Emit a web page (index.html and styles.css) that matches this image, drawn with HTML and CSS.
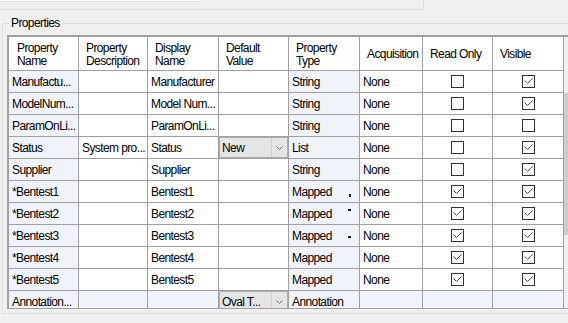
FILE: index.html
```html
<!DOCTYPE html>
<html lang="en">
<head>
  <meta charset="UTF-8">
  <title>Properties</title>
  <link rel="stylesheet" href="styles.css">
</head>
<body>

  <div class="toolbar">
    <div class="search"></div>
  </div>

  <fieldset class="group">
    <legend>Properties</legend>

    <div class="grid">
      <div class="table">
        <!-- header -->
        <div class="head first">Property<br>Name</div>
        <div class="head">Property<br>Description</div>
        <div class="head">Display<br>Name</div>
        <div class="head">Default<br>Value</div>
        <div class="head">Property<br>Type</div>
        <div class="head">Acquisition</div>
        <div class="head">Read Only</div>
        <div class="head">Visible</div>

        <div class="cell key">Manufactu...</div>
        <div class="cell"></div>
        <div class="cell">Manufacturer</div>
        <div class="cell"></div>
        <div class="cell type">String</div>
        <div class="cell">None</div>
        <div class="cell check"><span class="box"></span></div>
        <div class="cell check"><span class="box"><svg width="11" height="11" viewBox="0 0 11 11"><path d="M1.5 4.5 L4.5 7.5 L9.5 2.5"/></svg></span></div>

        <div class="cell key">ModelNum...</div>
        <div class="cell"></div>
        <div class="cell">Model Num...</div>
        <div class="cell"></div>
        <div class="cell type">String</div>
        <div class="cell">None</div>
        <div class="cell check"><span class="box"></span></div>
        <div class="cell check"><span class="box"><svg width="11" height="11" viewBox="0 0 11 11"><path d="M1.5 4.5 L4.5 7.5 L9.5 2.5"/></svg></span></div>

        <div class="cell key">ParamOnLi...</div>
        <div class="cell"></div>
        <div class="cell">ParamOnLi...</div>
        <div class="cell"></div>
        <div class="cell type">String</div>
        <div class="cell">None</div>
        <div class="cell check"><span class="box"></span></div>
        <div class="cell check"><span class="box"></span></div>

        <div class="cell key">Status</div>
        <div class="cell">System pro...</div>
        <div class="cell">Status</div>
        <div class="cell combo-cell">
          <div class="combo"><span class="combo-text">New</span><span class="arrow"><svg width="7" height="4" viewBox="0 0 7 4"><path d="M0.5 0.5 L3.5 3.5 L6.5 0.5"/></svg></span></div>
        </div>
        <div class="cell type">List</div>
        <div class="cell">None</div>
        <div class="cell check"><span class="box"></span></div>
        <div class="cell check"><span class="box"><svg width="11" height="11" viewBox="0 0 11 11"><path d="M1.5 4.5 L4.5 7.5 L9.5 2.5"/></svg></span></div>

        <div class="cell key">Supplier</div>
        <div class="cell"></div>
        <div class="cell">Supplier</div>
        <div class="cell"></div>
        <div class="cell type">String</div>
        <div class="cell">None</div>
        <div class="cell check"><span class="box"></span></div>
        <div class="cell check"><span class="box"><svg width="11" height="11" viewBox="0 0 11 11"><path d="M1.5 4.5 L4.5 7.5 L9.5 2.5"/></svg></span></div>

        <div class="cell key">*Bentest1</div>
        <div class="cell"></div>
        <div class="cell">Bentest1</div>
        <div class="cell"></div>
        <div class="cell type">Mapped<span class="mark mark-low"></span></div>
        <div class="cell">None</div>
        <div class="cell check"><span class="box"><svg width="11" height="11" viewBox="0 0 11 11"><path d="M1.5 4.5 L4.5 7.5 L9.5 2.5"/></svg></span></div>
        <div class="cell check"><span class="box"><svg width="11" height="11" viewBox="0 0 11 11"><path d="M1.5 4.5 L4.5 7.5 L9.5 2.5"/></svg></span></div>

        <div class="cell key">*Bentest2</div>
        <div class="cell"></div>
        <div class="cell">Bentest2</div>
        <div class="cell"></div>
        <div class="cell type">Mapped<span class="mark mark-top"></span></div>
        <div class="cell">None</div>
        <div class="cell check"><span class="box"><svg width="11" height="11" viewBox="0 0 11 11"><path d="M1.5 4.5 L4.5 7.5 L9.5 2.5"/></svg></span></div>
        <div class="cell check"><span class="box"><svg width="11" height="11" viewBox="0 0 11 11"><path d="M1.5 4.5 L4.5 7.5 L9.5 2.5"/></svg></span></div>

        <div class="cell key">*Bentest3</div>
        <div class="cell"></div>
        <div class="cell">Bentest3</div>
        <div class="cell"></div>
        <div class="cell type">Mapped<span class="mark mark-mid"></span></div>
        <div class="cell">None</div>
        <div class="cell check"><span class="box"><svg width="11" height="11" viewBox="0 0 11 11"><path d="M1.5 4.5 L4.5 7.5 L9.5 2.5"/></svg></span></div>
        <div class="cell check"><span class="box"><svg width="11" height="11" viewBox="0 0 11 11"><path d="M1.5 4.5 L4.5 7.5 L9.5 2.5"/></svg></span></div>

        <div class="cell key">*Bentest4</div>
        <div class="cell"></div>
        <div class="cell">Bentest4</div>
        <div class="cell"></div>
        <div class="cell type">Mapped</div>
        <div class="cell">None</div>
        <div class="cell check"><span class="box"><svg width="11" height="11" viewBox="0 0 11 11"><path d="M1.5 4.5 L4.5 7.5 L9.5 2.5"/></svg></span></div>
        <div class="cell check"><span class="box"><svg width="11" height="11" viewBox="0 0 11 11"><path d="M1.5 4.5 L4.5 7.5 L9.5 2.5"/></svg></span></div>

        <div class="cell key">*Bentest5</div>
        <div class="cell"></div>
        <div class="cell">Bentest5</div>
        <div class="cell"></div>
        <div class="cell type">Mapped</div>
        <div class="cell">None</div>
        <div class="cell check"><span class="box"><svg width="11" height="11" viewBox="0 0 11 11"><path d="M1.5 4.5 L4.5 7.5 L9.5 2.5"/></svg></span></div>
        <div class="cell check"><span class="box"><svg width="11" height="11" viewBox="0 0 11 11"><path d="M1.5 4.5 L4.5 7.5 L9.5 2.5"/></svg></span></div>

        <!-- read-only row -->
        <div class="cell key">Annotation...</div>
        <div class="cell ro"></div>
        <div class="cell ro"></div>
        <div class="cell combo-cell">
          <div class="combo"><span class="combo-text">Oval T...</span><span class="arrow"><svg width="7" height="4" viewBox="0 0 7 4"><path d="M0.5 0.5 L3.5 3.5 L6.5 0.5"/></svg></span></div>
        </div>
        <div class="cell type">Annotation</div>
        <div class="cell ro"></div>
        <div class="cell ro"></div>
        <div class="cell ro"></div>
      </div>

      <div class="scrollbar">
        <div class="thumb"></div>
      </div>
    </div>
  </fieldset>

</body>
</html>
```

FILE: styles.css
```css
/* Window */
body {
  margin: 0;
  background: #f0f0f0;
  font-family: "Liberation Sans", Arial, sans-serif;
  font-size: 12px;
  letter-spacing: -0.6px;
  color: #000;
  overflow: hidden;
}

/* Strip above the group box */
.toolbar {
  width: 423px;
  height: 9px;
  border-right: 1px solid #dcdcdc;
  border-bottom: 1px solid #dcdcdc;
}

.search {
  width: 202px;
  height: 1px;
  background: #fff;
  border-bottom: 1px solid #e3e3e3;
}

/* Group box (runs on past the right edge of the window) */
.group {
  box-sizing: border-box;
  margin: 6px 0 0 2px;
  padding: 5px 0 4px 4px;
  border: 1px solid #dcdcdc;
  border-right: none;
  width: 566px;
  min-width: 0;
  overflow: hidden;
}

.group legend {
  padding: 0 2px;
  margin-left: 2px;
  line-height: 14px;
}

/* Data grid */
.grid {
  display: flex;
  height: 271px;
  overflow: hidden;
  border-top: 2px solid #a0a0a0;
  border-left: 2px solid #a0a0a0;
  border-bottom: 1px solid #a0a0a0;
  background: #fff;
}

.table {
  display: grid;
  grid-template-columns: 70px 69px 71px 70px 71px 63px 70px 71px;
  grid-template-rows: 34px;
  grid-auto-rows: 22px;
  width: 555px;
  flex: none;
}

.head,
.cell {
  box-sizing: border-box;
  border-right: 1px solid #a0a0a0;
  border-bottom: 1px solid #a0a0a0;
  display: flex;
  align-items: center;
  white-space: nowrap;
  overflow: hidden;
}

.head {
  padding: 2px 4px 0 7px;
  line-height: 13px;
}

.head.first {
  padding-left: 8px;
}

.cell {
  padding: 0 3px;
}

.key,
.type,
.ro {
  background: #f0f4fa;
}

.type {
  justify-content: space-between;
  padding-right: 8px;
}

/* Small busy marks in mapped cells */
.mark {
  width: 3px;
  height: 2px;
  background: #1a1a1a;
  align-self: flex-start;
}

.mark-low {
  width: 2px;
  height: 3px;
  margin-top: 13px;
}

.mark-top {
  margin-top: 6px;
}

.mark-mid {
  margin-top: 11px;
}

/* Check boxes */
.check {
  justify-content: center;
  padding: 0;
}

.box {
  width: 13px;
  height: 13px;
  box-sizing: border-box;
  border: 1px solid #333;
  background: #fff;
  display: block;
}

.box svg {
  display: block;
}

.box path {
  fill: none;
  stroke: #4d4d4d;
  stroke-width: 1;
}

/* Combo box cells */
.combo-cell {
  padding: 0;
  align-items: stretch;
}

.combo {
  flex: 1;
  display: flex;
  border: 1px solid #adadad;
  background: #e5e5e5;
}

.combo-text {
  flex: 1;
  padding-left: 2px;
  display: flex;
  align-items: center;
}

.arrow {
  width: 15px;
  border-left: 1px solid #cfcfcf;
  display: flex;
  align-items: center;
  justify-content: center;
}

.arrow path {
  fill: none;
  stroke: #6d6d6d;
  stroke-width: 1;
}

/* Vertical scroll bar, only its left edge is in view */
.scrollbar {
  flex: 1;
  min-width: 0;
  background: #f0f0f0;
}

.thumb {
  margin-top: 56px;
  height: 142px;
  background: #cdcdcd;
}
```
